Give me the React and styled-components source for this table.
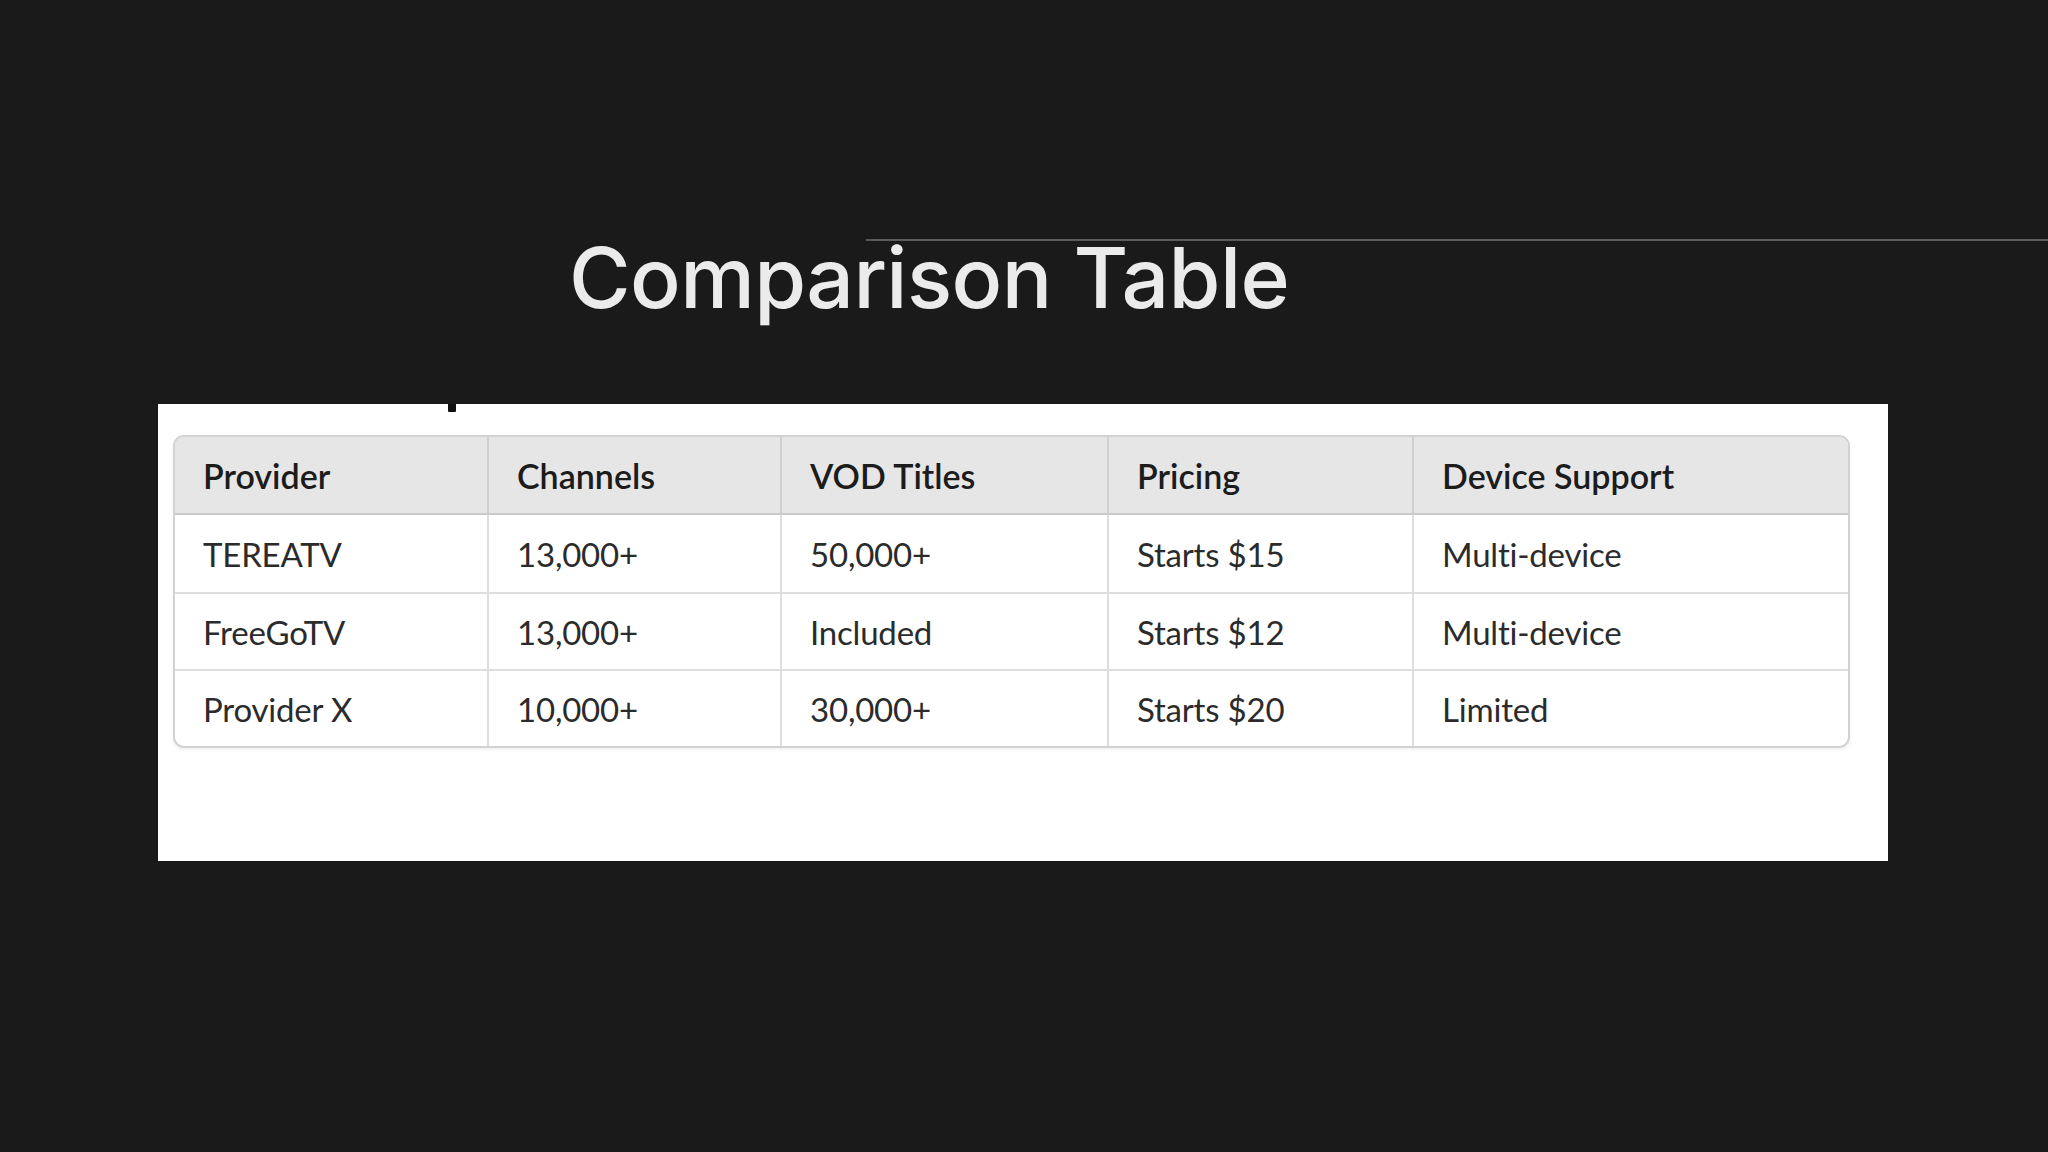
import styled, { createGlobalStyle } from "styled-components";

const GlobalStyle = createGlobalStyle`
  html, body {
    margin: 0;
    padding: 0;
    background-color: #1a1a1a;
  }
  #root {
    min-height: 100vh;
  }
`;

const Page = styled.div`
  width: 2048px;
  height: 1152px;
  box-sizing: border-box;
  padding: 239px 0 0 158px;
  overflow: hidden;
  background-color: #1a1a1a;
`;

const Header = styled.header`
  display: flex;
  flex-direction: column;
`;

const Rule = styled.div`
  margin-left: 708px;
  height: 2px;
  background-color: #5a5a5a;
`;

const Title = styled.h1`
  margin: -5px 0 0 411px;
  font-family: Inter, "Liberation Sans", sans-serif;
  font-size: 84px;
  font-weight: 500;
  line-height: 1;
  letter-spacing: -0.6px;
  color: #ebebeb;
`;

const Panel = styled.section`
  position: relative;
  margin-top: 84px;
  width: 1730px;
  height: 457px;
  box-sizing: border-box;
  padding: 31px 38px 0 15px;
  background-color: #ffffff;
`;

// descender of the heading that is cut off above the panel
const CutMark = styled.span`
  position: absolute;
  top: 0;
  left: 290px;
  width: 8px;
  height: 8px;
  background-color: #111;
  border-radius: 0 0 1px 1px;
`;

const Table = styled.table`
  width: 1677px;
  border-collapse: separate;
  border-spacing: 0;
  border: 2px solid #d2d2d2;
  border-radius: 11px;
  overflow: hidden;
  table-layout: fixed;
  font-family: Lato, "Open Sans", sans-serif;
  font-size: 34px;
  box-shadow: 0 2px 3px rgba(0, 0, 0, 0.06);
`;

const HeadCell = styled.th`
  height: 78px;
  box-sizing: border-box;
  padding: 0 0 0 28px;
  text-align: left;
  font-weight: 600;
  color: #1c1c1c;
  background-color: #e6e6e6;
  border-bottom: 2px solid #c9c9c9;
  border-left: ${(p) => (p.$first ? "none" : "2px solid #d0d0d0")};
`;

const Cell = styled.td`
  height: 77px;
  box-sizing: border-box;
  padding: 0 0 0 28px;
  font-size: 33px;
  font-weight: 400;
  letter-spacing: -0.2px;
  color: #2b2b2b;
  border-top: ${(p) => (p.$firstRow ? "none" : "2px solid #dedede")};
  border-left: ${(p) => (p.$first ? "none" : "2px solid #dedede")};
`;

const columns = [
  { label: "Provider", width: 312 },
  { label: "Channels", width: 293 },
  { label: "VOD Titles", width: 327 },
  { label: "Pricing", width: 305 },
  { label: "Device Support", width: 436 },
];

const rows = [
  ["TEREATV", "13,000+", "50,000+", "Starts $15", "Multi-device"],
  ["FreeGoTV", "13,000+", "Included", "Starts $12", "Multi-device"],
  ["Provider X", "10,000+", "30,000+", "Starts $20", "Limited"],
];

const App = () => {
  return (
    <>
      <GlobalStyle />
      <Page>
        <Header>
          <Rule />
          <Title>Comparison Table</Title>
        </Header>
        <Panel>
          <CutMark />
          <Table>
            <colgroup>
              {columns.map((c) => (
                <col key={c.label} style={{ width: c.width }} />
              ))}
            </colgroup>
            <thead>
              <tr>
                {columns.map((c, i) => (
                  <HeadCell key={c.label} $first={i === 0}>
                    {c.label}
                  </HeadCell>
                ))}
              </tr>
            </thead>
            <tbody>
              {rows.map((r, ri) => (
                <tr key={r[0]}>
                  {r.map((v, ci) => (
                    <Cell key={ci} $first={ci === 0} $firstRow={ri === 0}>
                      {v}
                    </Cell>
                  ))}
                </tr>
              ))}
            </tbody>
          </Table>
        </Panel>
      </Page>
    </>
  );
};

export default App;
